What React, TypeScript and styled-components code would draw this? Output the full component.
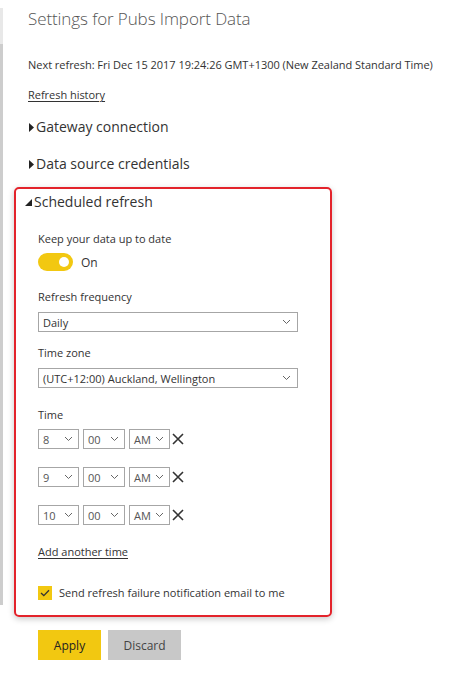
import React from "react";
import styled, { createGlobalStyle } from "styled-components";

const Global = createGlobalStyle`
  html, body { margin: 0; padding: 0; background: #fff; }
  body { font-family: "Open Sans", "Noto Sans", Arial, sans-serif; color: #333; }
`;

const Page = styled.div`
  display: flex;
  align-items: flex-start;
  width: 474px;
  height: 682px;
  overflow: hidden;
`;

const Rail = styled.div`
  width: 3px;
  flex: none;
  margin-top: 8px;
  height: 597px;
  background: linear-gradient(#e8e8e8 0 36px, #cdcdcd 36px);
`;

const Main = styled.div`
  flex: 1;
  padding-left: 25px;
  display: flex;
  flex-direction: column;
  align-items: flex-start;
`;

const Title = styled.h1`
  margin: 7px 0 0;
  font-size: 17px;
  line-height: 24px;
  font-weight: 300;
  color: #555;
  letter-spacing: -0.1px;
`;

const Line = styled.div<{ $mt: number }>`
  margin-top: ${(p) => p.$mt}px;
  font-size: 11px;
  line-height: 16px;
  color: #333;
  white-space: nowrap;
  letter-spacing: -0.03px;
`;

const Link = styled.a`
  color: #333;
  text-decoration: underline;
  text-underline-offset: 2px;
  cursor: pointer;
`;

const SectionHeader = styled.div<{ $mt: number; $expanded?: boolean }>`
  margin-top: ${(p) => p.$mt}px;
  display: flex;
  align-items: center;
  font-size: 14px;
  line-height: 20px;
  color: #333;
  padding-left: ${(p) => (p.$expanded ? "9px" : "1px")};
`;

const Caret = styled.svg`
  flex: none;
  margin-right: 2px;
`;

const Box = styled.div`
  margin-top: 13px;
  margin-left: -14px;
  width: 318px;
  box-sizing: border-box;
  border: 2px solid #e3232b;
  border-radius: 5px;
  box-shadow: 0 2px 6px rgba(0, 0, 0, 0.22);
  padding: 3px 0 14px;
  display: flex;
  flex-direction: column;
`;

const BoxBody = styled.div`
  padding-left: 22px;
  display: flex;
  flex-direction: column;
  align-items: flex-start;
`;

const Label = styled.div<{ $mt: number }>`
  margin-top: ${(p) => p.$mt}px;
  font-size: 11px;
  line-height: 16px;
  color: #333;
`;

const ToggleRow = styled.div`
  margin-top: 6px;
  display: flex;
  align-items: center;
  gap: 8px;
  font-size: 12px;
  color: #333;
`;

const Toggle = styled.div`
  width: 35px;
  height: 18px;
  border-radius: 9px;
  background: #f2c811;
  display: flex;
  align-items: center;
  justify-content: flex-end;
  padding-right: 4px;
  box-sizing: border-box;
`;

const Knob = styled.div`
  width: 10px;
  height: 10px;
  border-radius: 50%;
  background: #fff;
`;

const Select = styled.div<{ $w: number; $mt?: number }>`
  margin-top: ${(p) => p.$mt ?? 0}px;
  width: ${(p) => p.$w}px;
  height: 20px;
  box-sizing: border-box;
  border: 1px solid #a6a6a6;
  background: #fff;
  display: flex;
  align-items: center;
  justify-content: space-between;
  padding: 0 6px 0 4px;
  font-size: 11px;
  color: #333;
`;

const TimeRow = styled.div<{ $mt: number }>`
  margin-top: ${(p) => p.$mt}px;
  display: flex;
  align-items: center;
  gap: 4px;
`;

const TimeSelect = styled(Select)`
  color: #555;
  padding: 0 5px 0 4px;
`;

const Remove = styled.svg`
  margin-left: -2px;
`;

const CheckRow = styled.div`
  margin-top: 25px;
  display: flex;
  align-items: center;
  gap: 7px;
  font-size: 11px;
  line-height: 16px;
  color: #333;
`;

const CheckBox = styled.div`
  width: 14px;
  height: 14px;
  background: #f2c811;
  display: flex;
  align-items: center;
  justify-content: center;
`;

const Buttons = styled.div`
  margin-top: 13px;
  margin-left: 10px;
  display: flex;
  gap: 7px;
`;

const Button = styled.button<{ $primary?: boolean; $w: number }>`
  width: ${(p) => p.$w}px;
  height: 30px;
  border: none;
  padding: 0;
  font-family: inherit;
  font-size: 12px;
  color: ${(p) => (p.$primary ? "#222" : "#444")};
  background: ${(p) => (p.$primary ? "#f2c811" : "#c8c8c8")};
`;

const Chevron = () => (
  <svg width="9" height="6" viewBox="0 0 9 6">
    <path d="M1 1 L4.5 4.5 L8 1" fill="none" stroke="#666" strokeWidth="1" />
  </svg>
);

const Right = () => (
  <Caret width="5" height="9" viewBox="0 0 5 9">
    <path d="M0 0 L5 4.5 L0 9 Z" fill="#222" />
  </Caret>
);

const Down = () => (
  <Caret width="7" height="7" viewBox="0 0 7 7">
    <path d="M7 0 L7 7 L0 7 Z" fill="#222" />
  </Caret>
);

const times = ["8", "9", "10"];

export default function App() {
  return (
    <>
      <Global />
      <Page>
        <Rail />
        <Main>
          <Title>Settings for Pubs Import Data</Title>
          <Line $mt={26}>
            Next refresh: Fri Dec 15 2017 19:24:26 GMT+1300 (New Zealand Standard Time)
          </Line>
          <Line $mt={14}>
            <Link>Refresh history</Link>
          </Line>
          <SectionHeader $mt={14}>
            <Right />
            Gateway connection
          </SectionHeader>
          <SectionHeader $mt={17}>
            <Right />
            Data source credentials
          </SectionHeader>
          <Box>
            <SectionHeader $mt={0} $expanded>
              <Down />
              Scheduled refresh
            </SectionHeader>
            <BoxBody>
              <Label $mt={19}>Keep your data up to date</Label>
              <ToggleRow>
                <Toggle>
                  <Knob />
                </Toggle>
                On
              </ToggleRow>
              <Label $mt={18}>Refresh frequency</Label>
              <Select $w={260} $mt={7}>
                Daily
                <Chevron />
              </Select>
              <Label $mt={13}>Time zone</Label>
              <Select $w={260} $mt={7}>
                (UTC+12:00) Auckland, Wellington
                <Chevron />
              </Select>
              <Label $mt={19}>Time</Label>
              {times.map((h, i) => (
                <TimeRow key={h} $mt={i === 0 ? 6 : 18}>
                  <TimeSelect $w={41}>
                    {h}
                    <Chevron />
                  </TimeSelect>
                  <TimeSelect $w={42}>
                    00
                    <Chevron />
                  </TimeSelect>
                  <TimeSelect $w={41}>
                    AM
                    <Chevron />
                  </TimeSelect>
                  <Remove width="12" height="12" viewBox="0 0 12 12">
                    <path d="M1 1 L11 11 M11 1 L1 11" stroke="#333" strokeWidth="1.6" />
                  </Remove>
                </TimeRow>
              ))}
              <Label $mt={19}>
                <Link>Add another time</Link>
              </Label>
              <CheckRow>
                <CheckBox>
                  <svg width="10" height="8" viewBox="0 0 10 8">
                    <path d="M1 4 L3.8 6.6 L9 1.2" fill="none" stroke="#333" strokeWidth="1.3" />
                  </svg>
                </CheckBox>
                Send refresh failure notification email to me
              </CheckRow>
            </BoxBody>
          </Box>
          <Buttons>
            <Button $primary $w={63}>Apply</Button>
            <Button $w={73}>Discard</Button>
          </Buttons>
        </Main>
      </Page>
    </>
  );
}
